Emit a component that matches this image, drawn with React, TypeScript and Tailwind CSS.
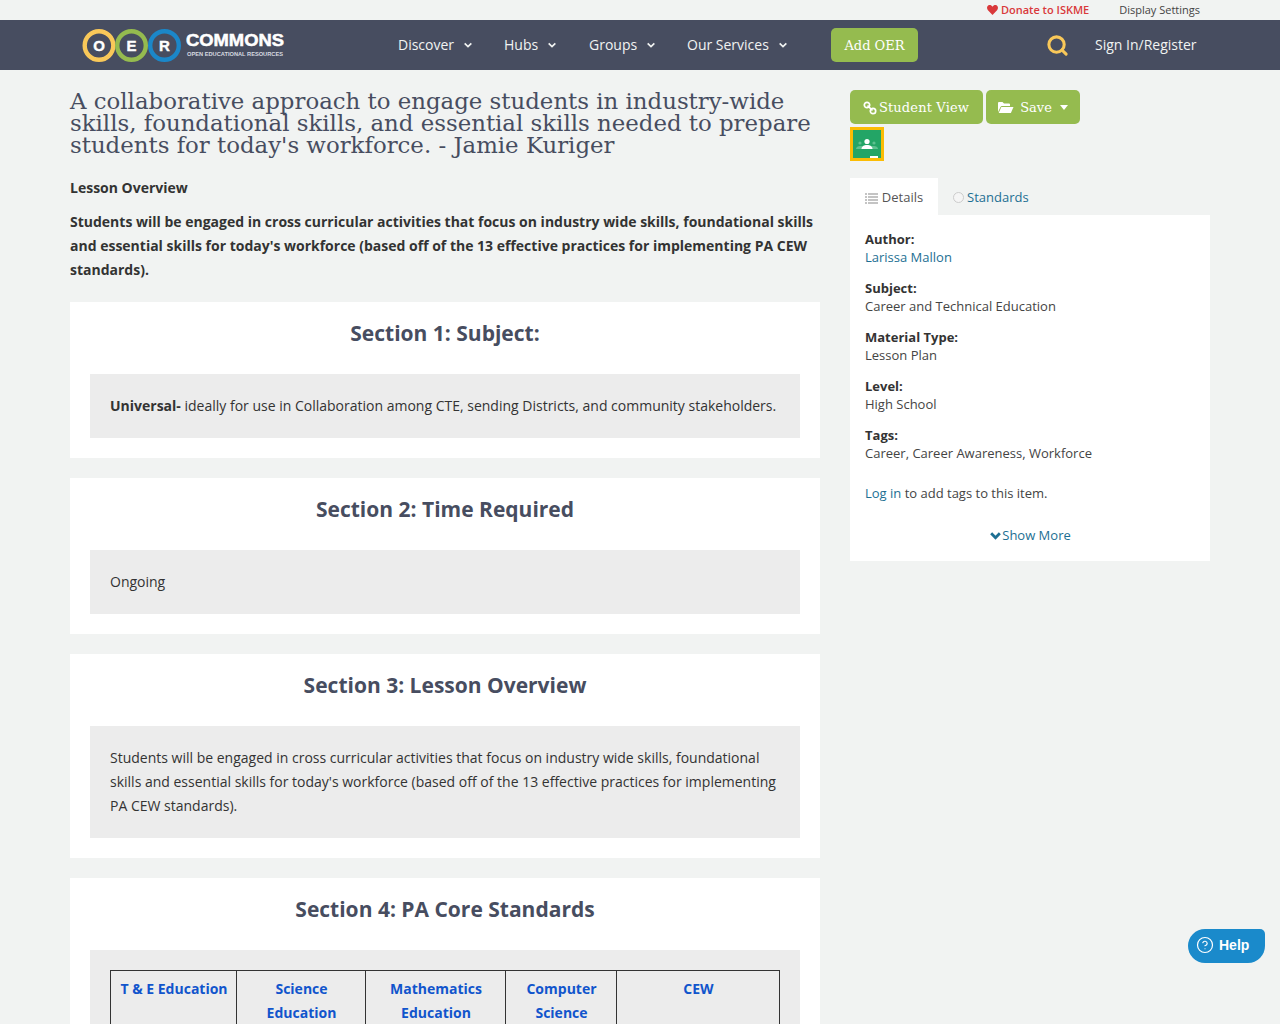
import { Search, HelpCircle } from "lucide-react";

const sans = "font-['Open_Sans',sans-serif]";
const slab = "font-['DejaVu_Serif',serif]";

function Chevron({ size, sw }: { size: number; sw: number }) {
  return (
    <svg width={size} height={size} viewBox="0 0 12 12" className="block shrink-0">
      <path d="M2 4l4 4 4-4" fill="none" stroke="currentColor" strokeWidth={sw} />
    </svg>
  );
}

function Logo() {
  const rings = [
    { x: 99, c: "#f9c859", t: "O" },
    { x: 131.500, c: "#95bb4f", t: "E" },
    { x: 164.500, c: "#1b87c9", t: "R" },
  ];
  return (
    <svg width="210" height="40" viewBox="80 22 210 40" className="block">
      {rings.map((r) => (
        <g key={r.t}>
          <circle cx={r.x} cy="42.5" r="14.3" fill="#474d60" stroke={r.c} strokeWidth="4.4" />
          <text x={r.x} y="47.8" textAnchor="middle" fill="#fff" stroke="#fff" strokeWidth="0.4" fontSize="15" fontWeight="700" fontFamily="Liberation Sans, sans-serif">{r.t}</text>
        </g>
      ))}
      <text x="186" y="42.7" textLength="98" lengthAdjust="spacingAndGlyphs" fill="#fff" fontSize="17" fontWeight="700" fontFamily="Liberation Sans, sans-serif" stroke="#fff" strokeWidth="0.5">COMMONS</text>
      <text x="187" y="52.7" textLength="96" lengthAdjust="spacingAndGlyphs" fill="#d8dbe0" fontSize="6" fontWeight="700" fontFamily="Liberation Sans, sans-serif">OPEN EDUCATIONAL RESOURCES</text>
    </svg>
  );
}

function NavItem({ label, w }: { label: string; w: string }) {
  return (
    <div className={`flex items-center ${w}`}>
      <span className="pb-[2px] text-[14px] text-[#f1f3f2]">{label}</span>
      <span className="ml-[9px] text-[#f1f3f2]"><Chevron size={10} sw={2} /></span>
    </div>
  );
}

function Meta({ label, children }: { label: string; children: React.ReactNode }) {
  return (
    <div className="mb-[13px] text-[13px] leading-[18px] text-[#444]">
      <div className="font-bold text-[#333]">{label}</div>
      <div>{children}</div>
    </div>
  );
}

function Section({ title, children }: { title: string; children: React.ReactNode }) {
  return (
    <section className="mb-5 bg-white p-5 pt-0">
      <h2 className="flex h-[72px] items-center justify-center pb-[9px] text-[21px] font-bold text-[#474d60]">{title}</h2>
      {children}
    </section>
  );
}

function ClassroomIcon() {
  return (
    <div className="h-[34px] w-[34px] border-[3px] border-[#fbbc04] bg-[#23a566]">
      <svg width="28" height="28" viewBox="0 0 28 28" className="block">
        <circle cx="7" cy="13" r="1.6" fill="#5fc08f" />
        <circle cx="21" cy="13" r="1.6" fill="#5fc08f" />
        <path d="M3 19c0-2 2-3 4-3h14c2 0 4 1 4 3z" fill="#5fc08f" />
        <circle cx="14" cy="11.5" r="2.6" fill="#fff" />
        <path d="M8.5 19c0-2.500 2.500-4 5.500-4s5.500 1.500 5.500 4z" fill="#fff" />
        <rect x="17" y="26" width="8" height="2" fill="#fff" />
      </svg>
    </div>
  );
}

function LinkGlyph() {
  return (
    <svg width="14" height="14" viewBox="0 0 14 14" className="block shrink-0">
      <circle cx="4" cy="4" r="2.7" fill="none" stroke="#fff" strokeWidth="1.7" />
      <circle cx="10" cy="10" r="2.7" fill="none" stroke="#fff" strokeWidth="1.7" />
      <path d="M4.500 4.500l5 5" stroke="#fff" strokeWidth="1.7" />
    </svg>
  );
}

function FolderGlyph() {
  return (
    <svg width="16" height="13" viewBox="0 0 16 13" className="block shrink-0">
      <path d="M0 11V2q0-1 1-1h3.500l1.500 1.500h5q1 0 1 1V5H4q-1 0-1.500 1z" fill="#fff" />
      <path d="M3.300 6h12.200l-2.600 6H.7z" fill="#fff" />
    </svg>
  );
}

function ListGlyph() {
  return (
    <svg width="13" height="12" viewBox="0 0 13 12" className="block shrink-0" fill="#c4c4c4">
      <rect x="0" y="1" width="2" height="2" />
      <rect x="0" y="4" width="2" height="2" />
      <rect x="0" y="7" width="2" height="2" />
      <rect x="0" y="10" width="2" height="2" />
      <rect x="3" y="1" width="10" height="2" />
      <rect x="3" y="4" width="10" height="2" />
      <rect x="3" y="7" width="10" height="2" />
      <rect x="3" y="10" width="10" height="2" />
    </svg>
  );
}

function HeartGlyph() {
  return (
    <svg width="11" height="10" viewBox="0 0 24 22" className="mr-[3px] block shrink-0">
      <path d="M12 22L2 11.500C-1 8-.5 3 2.500 1 6-1 10 .5 12 4c2-3.500 6-5 9.500-3 3 2 3.500 7 .5 10.500z" fill="#d9393b" />
    </svg>
  );
}

export default function App() {
  const heads: [string, string][] = [
    ["T & E Education", "w-[126px]"],
    ["Science Education", "w-[129px]"],
    ["Mathematics Education", "w-[140px]"],
    ["Computer Science", "w-[111px]"],
    ["CEW", "w-[163px]"],
  ];
  return (
    <div className={`relative h-screen overflow-hidden bg-[#f1f3f2] ${sans} text-[14px] text-[#333]`}>
      <div className="flex h-5 items-center justify-end pr-20 text-[11px]">
        <span className="flex items-center font-semibold text-[#d9393b]">
          <HeartGlyph />
          Donate to ISKME
        </span>
        <span className="ml-[30px] text-[#444]">Display Settings</span>
      </div>

      <header className="flex h-[50px] items-center bg-[#474d60]">
        <div className="ml-[80px] w-[318px]"><Logo /></div>
        <NavItem label="Discover" w="w-[106px]" />
        <NavItem label="Hubs" w="w-[85px]" />
        <NavItem label="Groups" w="w-[98px]" />
        <NavItem label="Our Services" w="w-[144px]" />
        <button className={`h-[34px] w-[87px] rounded-[5px] bg-[#95bb4f] pt-[1px] text-[13px] text-white ${slab}`}>Add OER</button>
        <Search size={23} strokeWidth={3.2} className="ml-[128px] text-[#f9c859]" />
        <span className="ml-[26px] pb-[2px] text-[14px] text-[#f1f3f2]">Sign In/Register</span>
      </header>

      <main className="mx-[70px] flex gap-[30px] pt-5">
        <div className="w-[750px] shrink-0">
          <h1 className={`pb-[20px] text-[22.850px] leading-[22px] text-[#474d60] ${slab}`}>
            A collaborative approach to engage students in industry-wide skills, foundational skills, and essential skills needed to prepare students for today's workforce. - Jamie Kuriger
          </h1>
          <p className="mb-[10px] font-bold leading-6">Lesson Overview</p>
          <p className="mb-[20px] font-bold leading-6">
            Students will be engaged in cross curricular activities that focus on industry wide skills, foundational skills and essential skills for today's workforce (based off of the 13 effective practices for implementing PA CEW standards).
          </p>

          <Section title="Section 1: Subject:">
            <div className="bg-[#ececec] p-5 leading-6">
              <b>Universal-</b> ideally for use in Collaboration among CTE, sending Districts, and community stakeholders.
            </div>
          </Section>
          <Section title="Section 2: Time Required">
            <div className="bg-[#ececec] p-5 leading-6">Ongoing</div>
          </Section>
          <Section title="Section 3: Lesson Overview">
            <div className="bg-[#ececec] p-5 leading-6">
              Students will be engaged in cross curricular activities that focus on industry wide skills, foundational skills and essential skills for today's workforce (based off of the 13 effective practices for implementing PA CEW standards).
            </div>
          </Section>
          <Section title="Section 4: PA Core Standards">
            <div className="bg-[#ececec] p-5 leading-6">
              <table className="w-full table-fixed border-collapse">
                <thead>
                  <tr>
                    {heads.map(([h, w]) => (
                      <th key={h} className={`${w} border border-[#333] pt-[6px] pr-[6px] pb-[60px] pl-[7px] text-center align-top font-bold text-[#1155cc]`}>{h}</th>
                    ))}
                  </tr>
                </thead>
              </table>
            </div>
          </Section>
        </div>

        <aside className="w-[360px] shrink-0">
          <div className="flex gap-[3px]">
            <button className={`flex h-[34px] w-[133px] items-center justify-center gap-[2px] rounded-[5px] bg-[#95bb4f] pt-[1px] pr-[1px] text-[13px] tracking-[0.15px] text-white ${slab}`}>
              <LinkGlyph /> Student View
            </button>
            <button className={`flex h-[34px] w-[94px] items-center justify-center rounded-[5px] bg-[#95bb4f] pt-[1px] text-[13px] text-white ${slab}`}>
              <span className="mr-[6px]"><FolderGlyph /></span> Save
              <span className="ml-[8px] h-0 w-0 border-x-[4.500px] border-t-[5px] border-x-transparent border-t-white" />
            </button>
          </div>
          <div className="mt-[3px]"><ClassroomIcon /></div>

          <div className="mt-[17px] flex h-[37px] text-[13px]">
            <div className="flex w-[88px] items-center justify-center gap-[4px] bg-white pt-[2px] text-[#555]">
              <ListGlyph /> Details
            </div>
            <div className="ml-[15px] flex items-center gap-[3px] pt-[2px] text-[#1d6f93]">
              <span className="h-[11px] w-[11px] rounded-full border border-[#ccc] bg-[#f5f5f5]" /> Standards
            </div>
          </div>
          <div className="h-[346px] bg-white px-[15px] pt-[15px]">
            <Meta label="Author:"><span className="text-[#1d6f93]">Larissa Mallon</span></Meta>
            <Meta label="Subject:">Career and Technical Education</Meta>
            <Meta label="Material Type:">Lesson Plan</Meta>
            <Meta label="Level:">High School</Meta>
            <Meta label="Tags:">Career, Career Awareness, Workforce</Meta>
            <p className="mt-[22px] text-[13px] leading-[18px] text-[#444]">
              <span className="text-[#1d6f93]">Log in</span> to add tags to this item.
            </p>
            <div className="mt-[24px] flex items-center justify-center text-[13px] leading-[18px] text-[#1d6f93]">
              <Chevron size={13} sw={2.6} /> Show More
            </div>
          </div>
        </aside>
      </main>

      <div className="absolute left-[1188px] top-[929px] flex h-[34px] w-[77px] items-center gap-[5px] rounded-tl-[17px] rounded-tr-[5px] rounded-br-[17px] rounded-bl-[17px] bg-[#1a8acb] pb-[2px] pl-[8px] font-['Liberation_Sans',sans-serif] text-[14px] font-bold text-white">
        <HelpCircle size={18} strokeWidth={1.6} /> Help
      </div>
    </div>
  );
}
